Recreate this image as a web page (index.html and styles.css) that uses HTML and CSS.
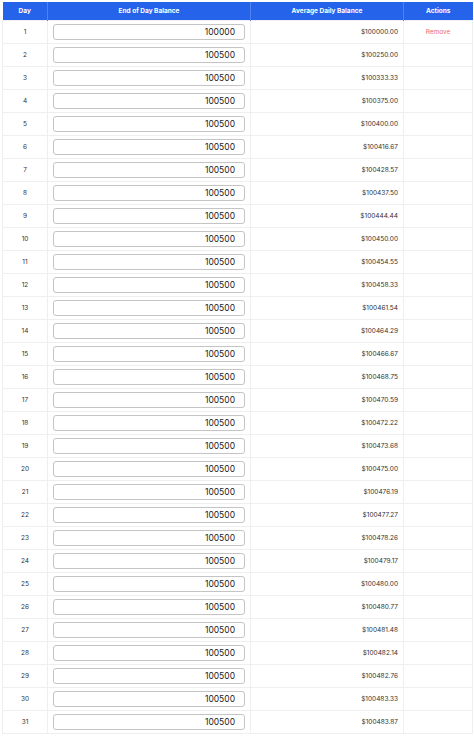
FILE: index.html
```html
<!DOCTYPE html>
<html>
<head>
<meta charset="utf-8">
<link rel="stylesheet" href="styles.css">
</head>
<body>
<table class="balances">
  <colgroup>
    <col class="c-day"><col class="c-end"><col class="c-avg"><col class="c-act">
  </colgroup>
  <thead>
    <tr><th>Day</th><th>End of Day Balance</th><th>Average Daily Balance</th><th>Actions</th></tr>
  </thead>
  <tbody id="rows"></tbody>
</table>
<script>
(function(){
  var vals=[100000];for(var i=1;i<31;i++)vals.push(100500);
  var avgs=["100000.00","100250.00","100333.33","100375.00","100400.00","100416.67","100428.57","100437.50","100444.44","100450.00","100454.55","100458.33","100461.54","100464.29","100466.67","100468.75","100470.59","100472.22","100473.68","100475.00","100476.19","100477.27","100478.26","100479.17","100480.00","100480.77","100481.48","100482.14","100482.76","100483.33","100483.87"];
  var tb=document.getElementById('rows');var h='';
  for(var d=0;d<31;d++){
    h+='<tr><td class="day">'+(d+1)+'</td><td class="end"><input class="bal" type="text" value="'+vals[d]+'"></td><td class="avg">$'+avgs[d]+'</td><td class="act">'+(d===0?'<span class="remove">Remove</span>':'')+'</td></tr>';
  }
  tb.innerHTML=h;
})();
</script>
</body>
</html>
```
FILE: styles.css
```css
html,body{margin:0;padding:0;background:#fff;}
body{padding:2px;font-family:Inter,"Noto Sans",sans-serif;color:#222;}
.balances{width:470px;border-collapse:collapse;table-layout:fixed;}
.c-day{width:45px}.c-end{width:203px}.c-avg{width:153px}.c-act{width:69px}
.balances th{background:#2563eb;color:#fff;font-size:6.5px;font-weight:700;height:18px;padding:0;text-align:center;border-left:1px solid #4f83ef;border-right:1px solid #4f83ef;}
.balances th:first-child{border-left:none}
.balances th:last-child{border-right:none}
.balances td{height:22px;padding:0;border:1px solid #efefef;font-size:6.5px;color:#333;}
.balances td.day{text-align:center;}
.balances td.end{padding:0 5px 0 5px;}
.bal{display:block;box-sizing:border-box;width:100%;height:16px;border:1px solid #c4c4c4;border-radius:3px;text-align:right;font-family:Inter,"Noto Sans",sans-serif;font-size:8.5px;color:#222;padding:0 9px 0 4px;margin:0;background:#fff;outline:none;}
.balances td.avg{text-align:right;padding-right:5px;}
.balances td.act{text-align:center;}
.remove{color:#ef6b6b;font-size:6.5px;}
```
